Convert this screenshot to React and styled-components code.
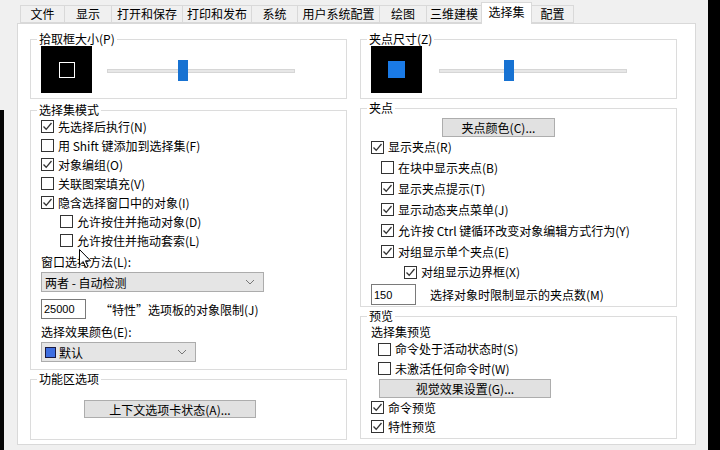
import React from "react";
import styled, { createGlobalStyle } from "styled-components";

const GlobalStyle = createGlobalStyle`
  html, body {
    margin: 0;
    padding: 0;
    background: #f0f0f0;
  }
  body {
    font-family: "Noto Sans CJK SC", "Liberation Sans", sans-serif;
    font-size: 12px;
    color: #000;
  }
`;

const TABS = [
  { label: "文件", w: 45 },
  { label: "显示", w: 48 },
  { label: "打开和保存", w: 72 },
  { label: "打印和发布", w: 70 },
  { label: "系统", w: 47 },
  { label: "用户系统配置", w: 83 },
  { label: "绘图", w: 48 },
  { label: "三维建模", w: 56 },
  { label: "选择集", w: 51, active: true },
  { label: "配置", w: 43 },
];

const Check = ({ checked }) => (
  <Box>
    {checked && (
      <svg width="11" height="11" viewBox="0 0 11 11">
        <path d="M1.5 5.5 L4.2 8.3 L9.5 2" fill="none" stroke="#333" strokeWidth="1.3" />
      </svg>
    )}
  </Box>
);

const CheckRow = ({ checked, indent = 0, h = 19, children }) => (
  <Row $indent={indent} $h={h}>
    <Check checked={checked} />
    <span>{children}</span>
  </Row>
);

const Chevron = () => (
  <svg width="10" height="6" viewBox="0 0 10 6">
    <path d="M1 1 L5 5 L9 1" fill="none" stroke="#777" strokeWidth="1" />
  </svg>
);

const App = () => {
  return (
    <>
      <GlobalStyle />
      <Screen>
        <LeftEdge />
        <Main>
          <TabStrip>
            {TABS.map((t) => (
              <Tab key={t.label} $w={t.w} $active={t.active}>
                {t.label}
              </Tab>
            ))}
          </TabStrip>
          <Panel>
            <Column>
              <Group $h={60}>
                <Legend>拾取框大小(P)</Legend>
                <SizeRow>
                  <Preview>
                    <PickBox />
                  </Preview>
                  <Slider>
                    <Track />
                    <Thumb style={{ left: 71 }} />
                  </Slider>
                </SizeRow>
              </Group>

              <Group $h={260} $mt={11}>
                <Legend>选择集模式</Legend>
                <Stack $pt={6}>
                  <CheckRow checked>先选择后执行(N)</CheckRow>
                  <CheckRow>用 Shift 键添加到选择集(F)</CheckRow>
                  <CheckRow checked>对象编组(O)</CheckRow>
                  <CheckRow>关联图案填充(V)</CheckRow>
                  <CheckRow checked>隐含选择窗口中的对象(I)</CheckRow>
                  <CheckRow indent={19}>允许按住并拖动对象(D)</CheckRow>
                  <CheckRow indent={19}>允许按住并拖动套索(L)</CheckRow>
                  <Label $mt={2}>窗口选择方法(L):</Label>
                  <Select $w={223} $mt={1}>
                    <span>两者 - 自动检测</span>
                    <Chevron />
                  </Select>
                  <InputRow $mt={7}>
                    <TextBox $w={45}>25000</TextBox>
                    <span>“特性”选项板的对象限制(J)</span>
                  </InputRow>
                  <Label $mt={3}>选择效果颜色(E):</Label>
                  <Select $w={155} $mt={1}>
                    <ColorValue>
                      <Swatch />
                      默认
                    </ColorValue>
                    <Chevron />
                  </Select>
                </Stack>
              </Group>

              <Group $h={61} $mt={9}>
                <Legend>功能区选项</Legend>
                <Stack $pt={20} $pl={53}>
                  <Button $w={172} $h={18}>上下文选项卡状态(A)...</Button>
                </Stack>
              </Group>
            </Column>

            <Column>
              <Group $h={60}>
                <Legend>夹点尺寸(Z)</Legend>
                <SizeRow>
                  <Preview>
                    <GripBox />
                  </Preview>
                  <Slider $ml={17}>
                    <Track />
                    <Thumb style={{ left: 65 }} />
                  </Slider>
                </SizeRow>
              </Group>

              <Group $h={199} $mt={9}>
                <Legend>夹点</Legend>
                <Stack $pt={9}>
                  <Button $w={113} $h={19} $ml={71}>夹点颜色(C)...</Button>
                  <CheckRow checked h={20}>显示夹点(R)</CheckRow>
                  <CheckRow indent={10} h={21}>在块中显示夹点(B)</CheckRow>
                  <CheckRow checked indent={10} h={21}>显示夹点提示(T)</CheckRow>
                  <CheckRow checked indent={10} h={21}>显示动态夹点菜单(J)</CheckRow>
                  <CheckRow checked indent={10} h={21}>允许按 Ctrl 键循环改变对象编辑方式行为(Y)</CheckRow>
                  <CheckRow checked indent={10} h={21}>对组显示单个夹点(E)</CheckRow>
                  <CheckRow checked indent={33} h={20}>对组显示边界框(X)</CheckRow>
                  <InputRow $mt={2}>
                    <TextBox $w={45} $h={21}>150</TextBox>
                    <span>选择对象时限制显示的夹点数(M)</span>
                  </InputRow>
                </Stack>
              </Group>

              <Group $h={123} $mt={9}>
                <Legend>预览</Legend>
                <Stack $pt={7}>
                  <Label $h={15}>选择集预览</Label>
                  <CheckRow indent={7} h={20}>命令处于活动状态时(S)</CheckRow>
                  <CheckRow indent={7}>未激活任何命令时(W)</CheckRow>
                  <Button $w={172} $h={19} $ml={8} $mt={1}>视觉效果设置(G)...</Button>
                  <CheckRow checked>命令预览</CheckRow>
                  <CheckRow checked>特性预览</CheckRow>
                </Stack>
              </Group>
            </Column>
          </Panel>
        </Main>
        <RightEdge />
        <Cursor width="13" height="20" viewBox="0 0 13 20">
          <path
            d="M0.5 0.5 L0.5 16 L4.2 12.6 L6.8 18.6 L9 17.6 L6.5 11.8 L11.5 11.8 Z"
            fill="#fff"
            stroke="#000"
            strokeWidth="1"
          />
        </Cursor>
      </Screen>
    </>
  );
};

const Screen = styled.div`
  position: relative;
  display: flex;
  width: 720px;
  height: 450px;
  overflow: hidden;
  background: #f0f0f0;
`;

const LeftEdge = styled.div`
  width: 4px;
  flex-shrink: 0;
  background: linear-gradient(to bottom, #f0f0f0 0 110px, #050505 110px);
`;

const RightEdge = styled.div`
  width: 12px;
  flex-shrink: 0;
  background: #000;
`;

const Main = styled.div`
  width: 704px;
  display: flex;
  flex-direction: column;
`;

const TabStrip = styled.div`
  display: flex;
  align-items: flex-end;
  height: 23px;
  padding-left: 17px;
  position: relative;
  z-index: 2;
`;

const Tab = styled.div`
  box-sizing: border-box;
  width: ${(p) => p.$w}px;
  height: ${(p) => (p.$active ? 22 : 18)}px;
  margin-left: -1px;
  margin-bottom: ${(p) => (p.$active ? -1 : 0)}px;
  border: 1px solid #d9d9d9;
  border-bottom: ${(p) => (p.$active ? "none" : "1px solid #d9d9d9")};
  background: ${(p) => (p.$active ? "#fff" : "#f0f0f0")};
  display: flex;
  justify-content: center;
  line-height: ${(p) => (p.$active ? 18 : 16)}px;
  font-size: 12px;
  white-space: nowrap;
  z-index: ${(p) => (p.$active ? 1 : 0)};
`;

const Panel = styled.div`
  box-sizing: border-box;
  margin-left: 13px;
  width: 679px;
  height: 422px;
  border: 1px solid #d9d9d9;
  background: #fff;
  display: grid;
  grid-template-columns: 317px 317px;
  column-gap: 13px;
  align-content: start;
  padding: 15px 0 0 12px;
`;

const Column = styled.div`
  display: flex;
  flex-direction: column;
`;

const Group = styled.div`
  position: relative;
  box-sizing: border-box;
  height: ${(p) => p.$h}px;
  margin-top: ${(p) => p.$mt || 0}px;
  border: 1px solid #dcdcdc;
`;

const Legend = styled.span`
  position: absolute;
  top: -8px;
  left: 6px;
  padding: 0 2px;
  background: #fff;
  line-height: 14px;
  white-space: nowrap;
`;

const SizeRow = styled.div`
  display: flex;
  align-items: flex-start;
  padding: 6px 0 0 10px;
`;

const Preview = styled.div`
  width: 51px;
  height: 47px;
  background: #000;
  display: flex;
  align-items: center;
  justify-content: center;
`;

const PickBox = styled.div`
  box-sizing: border-box;
  width: 16px;
  height: 16px;
  border: 1.5px solid #fff;
`;

const GripBox = styled.div`
  width: 17px;
  height: 17px;
  background: #1a7ae6;
`;

const Slider = styled.div`
  position: relative;
  width: 188px;
  height: 21px;
  margin: 14px 0 0 ${(p) => p.$ml || 15}px;
`;

const Track = styled.div`
  box-sizing: border-box;
  margin-top: 9px;
  height: 4px;
  background: #e7e7e7;
  border: 1px solid #d6d6d6;
`;

const Thumb = styled.div`
  position: absolute;
  top: 0;
  width: 10px;
  height: 21px;
  background: #1772d2;
`;

const Stack = styled.div`
  display: flex;
  flex-direction: column;
  align-items: flex-start;
  padding: ${(p) => p.$pt || 0}px 0 0 ${(p) => p.$pl ?? 10}px;
`;

const Row = styled.div`
  display: flex;
  align-items: center;
  gap: 4px;
  height: ${(p) => p.$h}px;
  margin-left: ${(p) => p.$indent}px;
  white-space: nowrap;
  line-height: 14px;
`;

const Box = styled.span`
  box-sizing: border-box;
  width: 13px;
  height: 13px;
  flex-shrink: 0;
  border: 1px solid #333;
  background: #fff;
  display: flex;
  align-items: center;
  justify-content: center;
`;

const Label = styled.div`
  height: ${(p) => p.$h || 19}px;
  line-height: ${(p) => p.$h || 19}px;
  margin-top: ${(p) => p.$mt || 0}px;
  white-space: nowrap;
`;

const Select = styled.div`
  box-sizing: border-box;
  width: ${(p) => p.$w}px;
  height: 20px;
  margin-top: ${(p) => p.$mt || 0}px;
  border: 1px solid #acacac;
  background: #e5e5e5;
  display: flex;
  align-items: center;
  justify-content: space-between;
  padding: 0 8px 0 3px;
  white-space: nowrap;
`;

const ColorValue = styled.span`
  display: flex;
  align-items: center;
  gap: 3px;
`;

const Swatch = styled.span`
  box-sizing: border-box;
  width: 11px;
  height: 11px;
  background: #3e6ee0;
  border: 1px solid #1a1a40;
`;

const InputRow = styled.div`
  display: flex;
  align-items: center;
  gap: 14px;
  margin-top: ${(p) => p.$mt || 0}px;
  white-space: nowrap;
`;

const TextBox = styled.div`
  box-sizing: border-box;
  width: ${(p) => p.$w}px;
  height: ${(p) => p.$h || 20}px;
  border: 1px solid #7a7a7a;
  background: #fff;
  padding-left: 2px;
  display: flex;
  align-items: center;
  font-family: "Liberation Sans", sans-serif;
  font-size: 11px;
`;

const Button = styled.div`
  box-sizing: border-box;
  width: ${(p) => p.$w}px;
  height: ${(p) => p.$h}px;
  margin-left: ${(p) => p.$ml || 0}px;
  margin-top: ${(p) => p.$mt || 0}px;
  border: 1px solid #adadad;
  background: #e1e1e1;
  display: flex;
  align-items: center;
  justify-content: center;
  white-space: nowrap;
`;

const Cursor = styled.svg`
  position: absolute;
  left: 79px;
  top: 249px;
  pointer-events: none;
`;

export default App;
